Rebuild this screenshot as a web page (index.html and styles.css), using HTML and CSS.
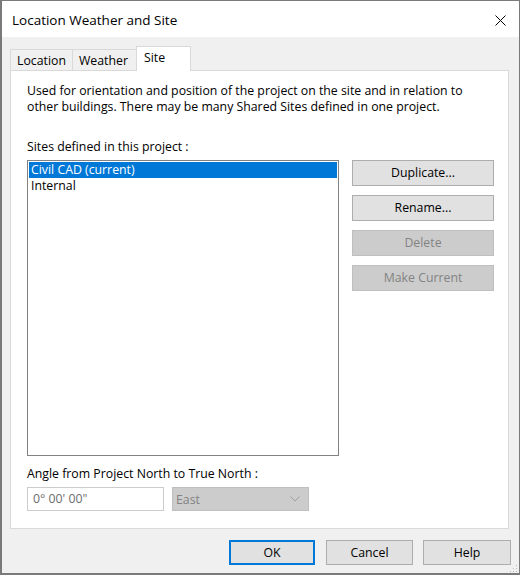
FILE: index.html
```html
<!DOCTYPE html>
<html>
<head>
<meta charset="utf-8">
<link rel="stylesheet" href="styles.css">
</head>
<body>
<div class="window">
  <div class="titlebar">
    <span class="title">Location Weather and Site</span>
    <svg class="close" width="11" height="11" viewBox="0 0 11 11"><path d="M0.5 0.5 L10.5 10.5 M10.5 0.5 L0.5 10.5" stroke="#000" stroke-width="1" fill="none"/></svg>
  </div>
  <div class="client">
    <div class="tabs">
      <div class="tab t-loc">Location</div>
      <div class="tab t-wea">Weather</div>
      <div class="tab t-site active">Site</div>
    </div>
    <div class="panel">
      <p class="desc">Used for orientation and position of the project on the site and in relation to other buildings. There may be many Shared Sites defined in one project.</p>
      <div class="label sites-label">Sites defined in this project :</div>
      <div class="sites">
        <div class="listbox">
          <div class="item selected">Civil CAD (current)</div>
          <div class="item">Internal</div>
        </div>
        <div class="side-buttons">
          <div class="btn">Duplicate...</div>
          <div class="btn">Rename...</div>
          <div class="btn disabled">Delete</div>
          <div class="btn disabled">Make Current</div>
        </div>
      </div>
      <div class="label angle-label">Angle from Project North to True North :</div>
      <div class="angle-row">
        <div class="textbox">0° 00' 00"</div>
        <div class="combo"><span>East</span>
          <svg width="10" height="6" viewBox="0 0 10 6"><path d="M0.5 0.5 L5 5 L9.5 0.5" stroke="#a0a0a0" stroke-width="1" fill="none"/></svg>
        </div>
      </div>
    </div>
    <div class="footer">
      <div class="btn fbtn b-ok default">OK</div>
      <div class="btn fbtn b-cancel">Cancel</div>
      <div class="btn fbtn b-help">Help</div>
    </div>
    <svg class="grip" width="9" height="9" viewBox="0 0 9 9">
      <rect x="7" y="1" width="1" height="1" fill="#b8b8b8"/>
      <rect x="4" y="4" width="1" height="1" fill="#b8b8b8"/>
      <rect x="7" y="4" width="1" height="1" fill="#b8b8b8"/>
      <rect x="1" y="7" width="1" height="1" fill="#b8b8b8"/>
      <rect x="4" y="7" width="1" height="1" fill="#b8b8b8"/>
      <rect x="7" y="7" width="1" height="1" fill="#b8b8b8"/>
    </svg>
  </div>
</div>
</body>
</html>
```
FILE: styles.css
```css
* { box-sizing: border-box; }
html, body { margin: 0; padding: 0; }
body {
  font-family: "Open Sans", "Noto Sans", sans-serif;
  font-size: 12.3px;
  color: #000;
  background: #fff;
}
.window {
  width: 520px;
  height: 575px;
  border: 1px solid #7a7a7a;
  border-left-width: 2px;
  border-bottom-width: 2px;
  display: flex;
  flex-direction: column;
  background: #f0f0f0;
}
.titlebar {
  height: 36px;
  background: #fff;
  display: flex;
  align-items: center;
  justify-content: space-between;
  padding: 2px 13px 0 10px;
}
.title {
  font-size: 13.5px;
}
.close { display: block; }
.client {
  flex: 1;
  position: relative;
  padding: 9px 0 0 8px;
}
.tabs {
  display: flex;
  align-items: flex-end;
  height: 24px;
  position: relative;
  z-index: 1;
}
.tab {
  height: 21px;
  border: 1px solid #d9d9d9;
  border-bottom: none;
  background: #f0f0f0;
  padding-left: 6px;
  line-height: 21px;
  margin-right: -1px;
}
.t-loc { width: 63px; }
.t-wea { width: 65px; }
.t-site { width: 55px; }
.tab.active {
  height: 25px;
  margin-bottom: -1px;
  background: #fff;
  padding-left: 7px;
  line-height: 21px;
}
.panel {
  width: 499px;
  height: 459px;
  background: #fff;
  border: 1px solid #d9d9d9;
  padding: 12px 13px 0 16px;
}
.desc {
  margin: 0;
  line-height: 16px;
  width: 466px;
}
.label { line-height: 16px; }
.sites-label { margin-top: 24px; }
.sites {
  display: flex;
  margin-top: 5px;
}
.listbox {
  flex: 0 0 312px;
  height: 296px;
  border: 1px solid #828282;
  padding: 1px;
}
.item {
  height: 16px;
  line-height: 15px;
  padding-left: 2px;
}
.item.selected {
  background: #0078d7;
  color: #fff;
}
.side-buttons {
  margin-left: 13px;
  display: flex;
  flex-direction: column;
  gap: 10px;
  flex: 0 0 142px;
}
.btn {
  width: 142px;
  height: 26px;
  border: 1px solid #adadad;
  background: #e1e1e1;
  text-align: center;
  line-height: 24px;
}
.side-buttons .btn + .btn { margin-top: -1px; }
.btn.disabled {
  background: #cccccc;
  border-color: #bfbfbf;
  color: #838383;
}
.angle-label { margin-top: 10px; }
.angle-row {
  display: flex;
  gap: 8px;
  margin-top: 5px;
}
.textbox {
  width: 137px;
  height: 24px;
  border: 1px solid #cccccc;
  background: #fff;
  color: #6d6d6d;
  padding-left: 5px;
  line-height: 22px;
}
.combo {
  width: 137px;
  height: 24px;
  border: 1px solid #bfbfbf;
  background: #cccccc;
  color: #838383;
  display: flex;
  align-items: center;
  justify-content: space-between;
  padding: 0 8px 0 3px;
}
.combo svg { display: block; }
.footer {
  display: flex;
  justify-content: flex-end;
  padding: 11px 8px 0 0;
}
.fbtn {
  height: 25px;
  line-height: 23px;
}
.b-ok { width: 86px; margin-right: 11px; }
.b-cancel { width: 87px; margin-right: 10px; }
.b-help { width: 88px; }
.fbtn.default {
  border: 2px solid #0078d7;
  line-height: 21px;
}
.grip {
  position: absolute;
  right: 1px;
  bottom: 0px;
}
```
